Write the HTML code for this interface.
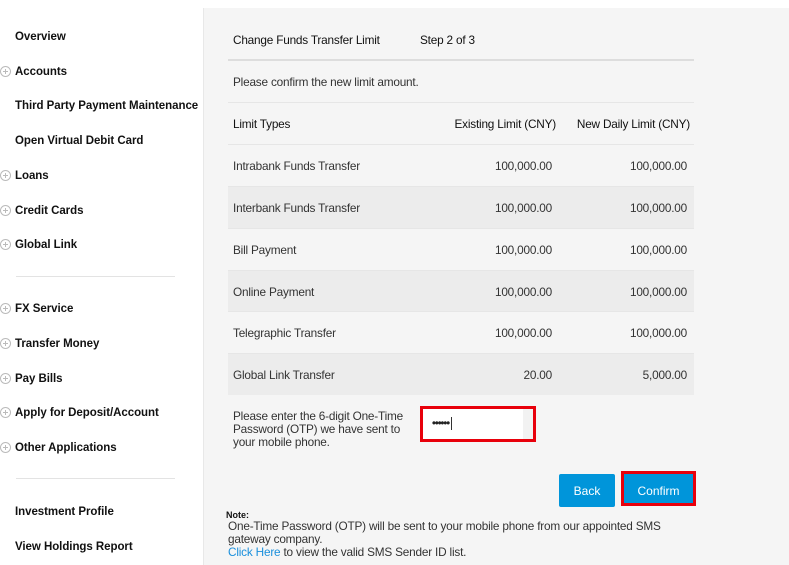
<!DOCTYPE html>
<html><head><meta charset="utf-8"><style>
*{margin:0;padding:0;box-sizing:border-box}
body{width:789px;height:565px;overflow:hidden;background:#fff;font-family:"Liberation Sans",Arial,sans-serif;color:#222;position:relative}
.a{position:absolute;white-space:nowrap}
.nav{font-weight:bold;font-size:11.5px;left:15px;color:#111;letter-spacing:-0.05px}
.pl{position:absolute;left:0;width:11px;height:11px;border:1px solid #bbb;border-radius:50%}
.pl:before{content:"";position:absolute;left:2px;top:4px;width:5px;height:1px;background:#bbb}
.pl:after{content:"";position:absolute;left:4px;top:2px;width:1px;height:5px;background:#bbb}
.hr{position:absolute;left:16px;width:159px;height:1px;background:#e3e3e3}
#panel{position:absolute;left:203px;top:8px;width:586px;height:557px;background:#f5f5f5;border-left:1px solid #e8e8e8}
.row{position:absolute;left:228px;width:466px;height:42px;border-top:1px solid #e6e6e6;font-size:11.8px;letter-spacing:-0.2px}
.row span{position:absolute;top:14px}
.l{left:5px}.e{right:142px}.n{right:7px}
.dk{background:#ececec}
.btn{position:absolute;background:#0095da;color:#fff;font-size:12px;text-align:center;border-radius:2px}
.t{font-size:11.8px;letter-spacing:-0.2px}
</style></head><body>
<div class="a nav" style="top:31px">Overview</div>
<div class="a nav" style="top:66px"><i class="pl" style="left:-15px;top:0"></i>Accounts</div>
<div class="a nav" style="top:100px">Third Party Payment Maintenance</div>
<div class="a nav" style="top:135px">Open Virtual Debit Card</div>
<div class="a nav" style="top:170px"><i class="pl" style="left:-15px;top:0"></i>Loans</div>
<div class="a nav" style="top:205px"><i class="pl" style="left:-15px;top:0"></i>Credit Cards</div>
<div class="a nav" style="top:239px"><i class="pl" style="left:-15px;top:0"></i>Global Link</div>
<div class="hr" style="top:276px"></div>
<div class="a nav" style="top:303px"><i class="pl" style="left:-15px;top:0"></i>FX Service</div>
<div class="a nav" style="top:338px"><i class="pl" style="left:-15px;top:0"></i>Transfer Money</div>
<div class="a nav" style="top:373px"><i class="pl" style="left:-15px;top:0"></i>Pay Bills</div>
<div class="a nav" style="top:407px"><i class="pl" style="left:-15px;top:0"></i>Apply for Deposit/Account</div>
<div class="a nav" style="top:442px"><i class="pl" style="left:-15px;top:0"></i>Other Applications</div>
<div class="hr" style="top:478px"></div>
<div class="a nav" style="top:506px">Investment Profile</div>
<div class="a nav" style="top:541px">View Holdings Report</div>

<div id="panel"></div>
<div class="a t" style="left:233px;top:33px;color:#111">Change Funds Transfer Limit</div>
<div class="a t" style="left:420px;top:33px;color:#111">Step 2 of 3</div>
<div class="a" style="left:228px;top:59px;width:466px;height:2px;background:#ddd"></div>
<div class="a t" style="left:233px;top:75px;color:#333">Please confirm the new limit amount.</div>
<div class="row" style="top:102px;color:#111"><span class="l">Limit Types</span><span class="e" style="right:138px">Existing Limit (CNY)</span><span class="n" style="right:4px">New Daily Limit (CNY)</span></div>
<div class="row" style="top:144px;color:#333"><span class="l">Intrabank Funds Transfer</span><span class="e">100,000.00</span><span class="n">100,000.00</span></div>
<div class="row dk" style="top:186px;color:#333"><span class="l">Interbank Funds Transfer</span><span class="e">100,000.00</span><span class="n">100,000.00</span></div>
<div class="row" style="top:228px;color:#333"><span class="l">Bill Payment</span><span class="e">100,000.00</span><span class="n">100,000.00</span></div>
<div class="row dk" style="top:270px;color:#333"><span class="l">Online Payment</span><span class="e">100,000.00</span><span class="n">100,000.00</span></div>
<div class="row" style="top:311px;color:#333"><span class="l">Telegraphic Transfer</span><span class="e">100,000.00</span><span class="n">100,000.00</span></div>
<div class="row dk" style="top:353px;color:#333"><span class="l">Global Link Transfer</span><span class="e">20.00</span><span class="n">5,000.00</span></div>
<div class="a t" style="left:233px;top:410px;line-height:13px;color:#333;white-space:normal;width:180px">Please enter the 6-digit One-Time Password (OTP) we have sent to your mobile phone.</div>
<div class="a" style="left:420px;top:406px;width:116px;height:36px;border:3px solid #e8000b;background:#fff">
<div class="a" style="right:0;top:0;width:10px;height:30px;background:#f2f2f2"></div>
<div class="a" style="left:9px;top:8px;font-size:11px;font-weight:bold;letter-spacing:-1px">••••••<span style="display:inline-block;width:1px;height:13px;background:#333;vertical-align:middle;margin-left:2px"></span></div></div>
<div class="btn" style="left:559px;top:474px;width:56px;height:33px;line-height:34px">Back</div>
<div class="a" style="left:621px;top:471px;width:75px;height:35px;border:3px solid #e8000b;background:#0095da;color:#fff;font-size:12px;text-align:center;line-height:34px">Confirm</div>
<div class="a" style="left:226px;top:510px;font-size:9px;font-weight:bold;color:#111">Note:</div>
<div class="a t" style="left:228px;top:520px;line-height:13px;color:#333;white-space:normal;width:468px">One-Time Password (OTP) will be sent to your mobile phone from our appointed SMS<br>gateway company.<br><span style="color:#1a8fdc">Click Here</span> to view the valid SMS Sender ID list.</div>
</body></html>
